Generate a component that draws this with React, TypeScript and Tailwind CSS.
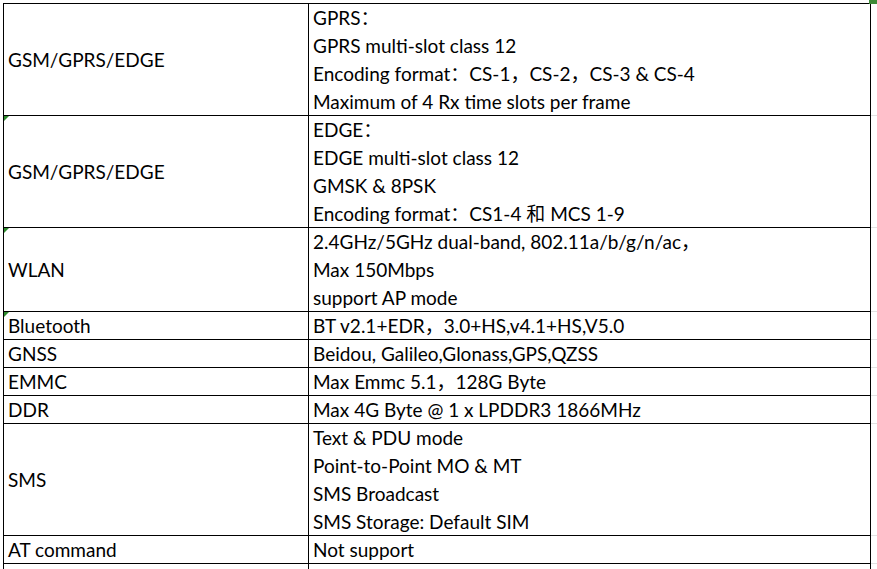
import { ReactNode } from "react"

type Row = {
  label: string
  lines: ReactNode[]
  h: string
  mark?: boolean
}

const rows: Row[] = [
  {
    label: "GSM/GPRS/EDGE",
    h: "h-[112px]",
    lines: [
      "GPRS：",
      "GPRS multi-slot class 12",
      "Encoding format：CS-1，CS-2，CS-3 & CS-4",
      "Maximum of 4 Rx time slots per frame",
    ],
  },
  {
    label: "GSM/GPRS/EDGE",
    h: "h-[112px]",
    mark: true,
    lines: [
      "EDGE：",
      "EDGE multi-slot class 12",
      "GMSK & 8PSK",
      "Encoding format：CS1-4 和 MCS 1-9",
    ],
  },
  {
    label: "WLAN",
    h: "h-[84px]",
    mark: true,
    lines: [
      "2.4GHz/5GHz dual-band, 802.11a/b/g/n/ac，",
      "Max 150Mbps",
      "support AP mode",
    ],
  },
  {
    label: "Bluetooth",
    h: "h-[28px]",
    mark: true,
    lines: ["BT v2.1+EDR，3.0+HS,v4.1+HS,V5.0"],
  },
  { label: "GNSS", h: "h-[28px]", lines: ["Beidou, Galileo,Glonass,GPS,QZSS"] },
  { label: "EMMC", h: "h-[28px]", lines: ["Max Emmc 5.1，128G Byte"] },
  { label: "DDR", h: "h-[28px]", lines: ["Max 4G Byte @ 1 x LPDDR3 1866MHz"] },
  {
    label: "SMS",
    h: "h-[112px]",
    lines: [
      "Text & PDU mode",
      "Point-to-Point MO & MT",
      "SMS Broadcast",
      "SMS Storage: Default SIM",
    ],
  },
  { label: "AT command", h: "h-[28px]", lines: ["Not support"] },
]

export default function App() {
  return (
    <div
      className="relative w-[877px] h-[569px] overflow-hidden bg-white pt-[3px] pl-[3px] text-black text-[19px]"
      style={{ fontFamily: "Lato, 'Noto Sans CJK SC', sans-serif" }}
    >
      <div className="absolute top-0 left-[869px] w-[8px] h-[4px] bg-[#3d8a36]" />

      <div className="w-[868px] h-px bg-black" />

      {rows.map((r, idx) => (
        <div key={idx} className={`flex ${r.h}`}>
          <div className="relative w-[306px] flex items-center border-x border-b border-black pl-[4px]">
            {r.mark && (
              <div className="absolute top-0 left-0 w-0 h-0 border-t-[5px] border-r-[5px] border-t-[#2e8b2e] border-r-transparent" />
            )}
            <span className="leading-[28px] whitespace-nowrap">{r.label}</span>
          </div>
          <div className="w-[562px] flex flex-col justify-center border-r border-b border-black pl-[4px]">
            {r.lines.map((t, i) => (
              <div key={i} className="leading-[28px] h-[28px] whitespace-nowrap">
                {t}
              </div>
            ))}
          </div>
          <div className="flex-1 border-b border-[#e1e1e1]" />
        </div>
      ))}

      <div className="flex h-[28px]">
        <div className="w-[306px] border-x border-black" />
        <div className="w-[562px] border-r border-black" />
      </div>
    </div>
  )
}
